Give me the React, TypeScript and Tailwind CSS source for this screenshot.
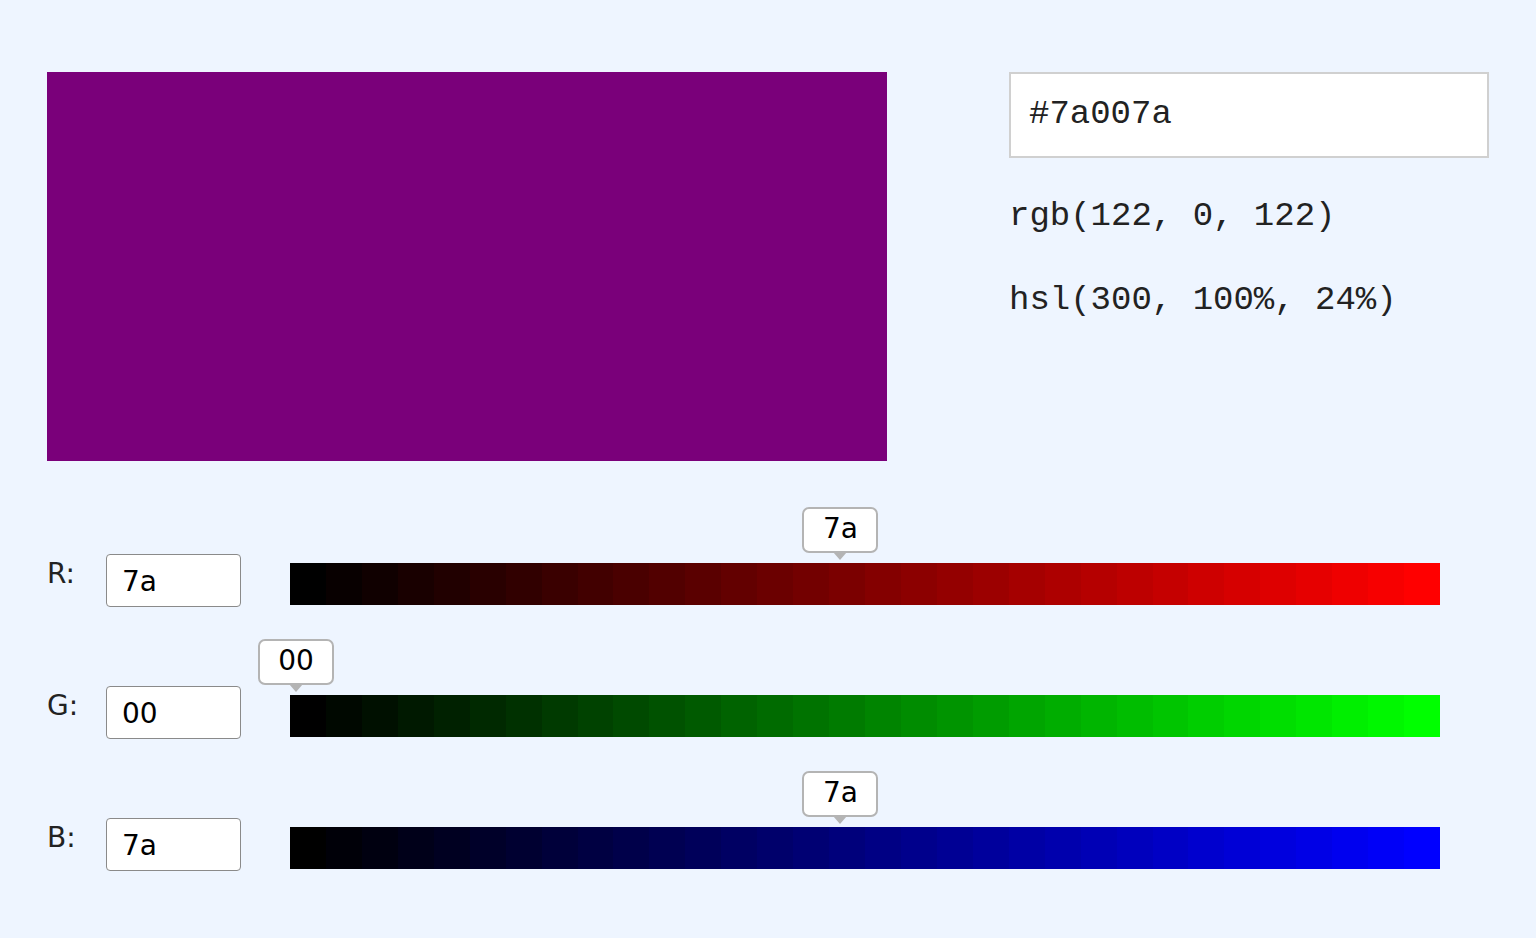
import { useState } from 'react';

type Channel = 'r' | 'g' | 'b';

const STEPS = 32;
const TRACK = 1150;
const THUMB = 12;

const toHex = (n: number) => n.toString(16).padStart(2, '0');

function rgbToHsl(r: number, g: number, b: number) {
  const rr = r / 255, gg = g / 255, bb = b / 255;
  const max = Math.max(rr, gg, bb), min = Math.min(rr, gg, bb);
  const l = (max + min) / 2;
  let h = 0, s = 0;
  if (max !== min) {
    const d = max - min;
    s = l > 0.5 ? d / (2 - max - min) : d / (max + min);
    if (max === rr) h = (gg - bb) / d + (gg < bb ? 6 : 0);
    else if (max === gg) h = (bb - rr) / d + 2;
    else h = (rr - gg) / d + 4;
    h *= 60;
  }
  return [Math.round(h), Math.round(s * 100), Math.round(l * 100)];
}

const Track = ({ channel }: { channel: Channel }) => (
  <div className="flex h-[42px] w-[1150px]">
    {Array.from({ length: STEPS }, (_, i) => {
      const v = Math.round((i / (STEPS - 1)) * 255);
      const c = channel === 'r' ? `rgb(${v},0,0)` : channel === 'g' ? `rgb(0,${v},0)` : `rgb(0,0,${v})`;
      return <div key={i} className="h-full flex-1" style={{ background: c }} />;
    })}
  </div>
);

const SliderRow = ({ label, channel, value }: { label: string; channel: Channel; value: number }) => {
  const center = THUMB / 2 + (value / 255) * (TRACK - THUMB);
  return (
    <div className="flex items-start">
      <span className="mt-[6px] w-[59px] text-[28px] leading-[28px] text-[#222]">{label}</span>
      <div className="flex h-[53px] w-[135px] items-center rounded-[4px] border border-[#8a8a8a] bg-white pl-[15px] pt-[2px] text-[28px] text-black">
        {toHex(value)}
      </div>
      <div className="relative ml-[49px] mt-[9px]">
        <div
          className="absolute bottom-[52px] flex h-[46px] w-[76px] -translate-x-1/2 items-center justify-center rounded-[7px] border-2 border-[#b4b4b4] bg-white pb-[2px] text-[28px] text-black"
          style={{ left: center }}
        >
          {toHex(value)}
          <span className="absolute -bottom-[9px] left-1/2 h-0 w-0 -translate-x-1/2 border-x-[7px] border-t-[8px] border-x-transparent border-t-[#b4b4b4]" />
        </div>
        <Track channel={channel} />
      </div>
    </div>
  );
};

export default function App() {
  const [rgb] = useState({ r: 0x7a, g: 0x00, b: 0x7a });
  const hex = `#${toHex(rgb.r)}${toHex(rgb.g)}${toHex(rgb.b)}`;
  const [h, s, l] = rgbToHsl(rgb.r, rgb.g, rgb.b);

  return (
    <div className="min-h-[938px] w-full bg-[#eef5ff] pl-[47px] pt-[72px] font-['DejaVu_Sans',sans-serif]">
      <div className="flex">
        <div className="h-[389px] w-[840px]" style={{ background: hex }} />
        <div className="ml-[122px] flex w-[480px] flex-col font-['Liberation_Mono',monospace] text-[34px] text-[#222]">
          <div className="flex h-[86px] items-center border-2 border-[#d0d0d0] bg-white pl-[18px] pb-[2px]">{hex}</div>
          <div className="mt-[38px] leading-[40px]">{`rgb(${rgb.r}, ${rgb.g}, ${rgb.b})`}</div>
          <div className="mt-[44px] leading-[40px]">{`hsl(${h}, ${s}%, ${l}%)`}</div>
        </div>
      </div>

      <div className="mt-[93px] flex flex-col gap-[79px]">
        <SliderRow label="R:" channel="r" value={rgb.r} />
        <SliderRow label="G:" channel="g" value={rgb.g} />
        <SliderRow label="B:" channel="b" value={rgb.b} />
      </div>
    </div>
  );
}
